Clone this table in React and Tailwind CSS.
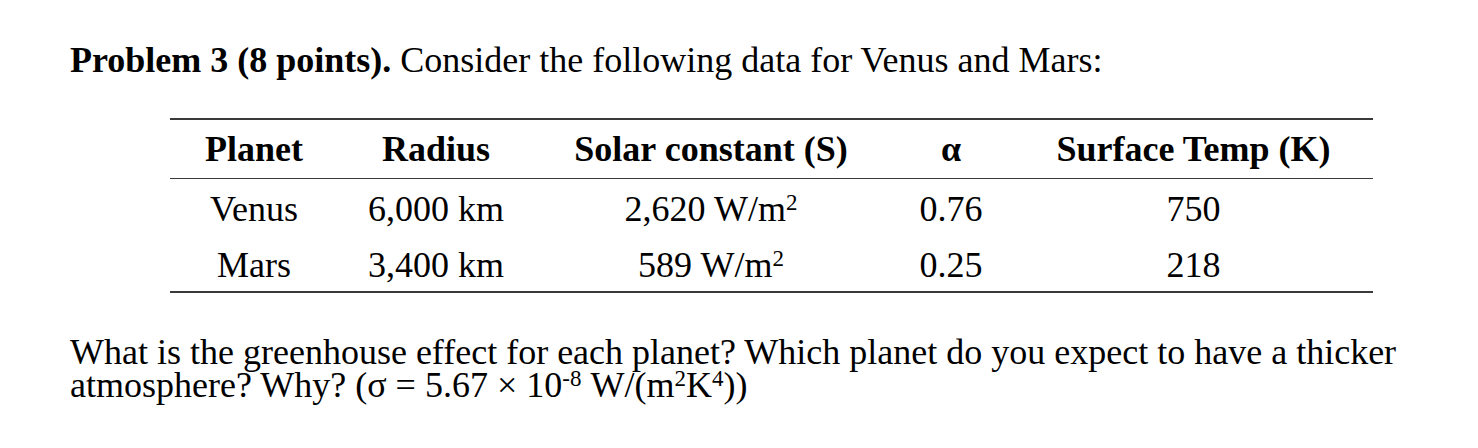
import React from "react";

const rows = [
  { planet: "Venus", radius: "6,000 km", solar: "2,620", alpha: "0.76", temp: "750" },
  { planet: "Mars", radius: "3,400 km", solar: "589", alpha: "0.25", temp: "218" },
];

const cols = "grid grid-cols-[168px_196px_354px_126px_359px]";

export default function App() {
  return (
    <div
      className="w-[1478px] h-[448px] bg-white text-black pl-[70px] pt-[40px]"
      style={{ fontFamily: '"Liberation Serif", "Times New Roman", serif' }}
    >
      <p className="text-[36px] leading-[40px]">
        <b>Problem 3 (8 points).</b> Consider the following data for Venus and Mars:
      </p>

      <div className="ml-[100px] mt-[38px] w-[1203px] border-t-2 border-b-2 border-[#3a3a3a] text-[36px]">
        <div className={`${cols} font-bold h-[59px] items-center border-b border-[#3a3a3a] text-center`}>
          <div>Planet</div>
          <div>Radius</div>
          <div>Solar constant (S)</div>
          <div>α</div>
          <div>Surface Temp (K)</div>
        </div>
        {rows.map((r) => (
          <div key={r.planet} className={`${cols} h-[56px] items-center text-center pt-[3px]`}>
            <div>{r.planet}</div>
            <div>{r.radius}</div>
            <div>
              {r.solar} W/m<sup className="text-[23px]">2</sup>
            </div>
            <div>{r.alpha}</div>
            <div>{r.temp}</div>
          </div>
        ))}
      </div>

      <p className="mt-[43px] text-[36px] leading-[33px] w-[1360px]">
        What is the greenhouse effect for each planet? Which planet do you expect to have a thicker
        atmosphere? Why? (σ = 5.67 × 10<sup className="text-[23px]">-8</sup> W/(m
        <sup className="text-[23px]">2</sup>K<sup className="text-[23px]">4</sup>))
      </p>
    </div>
  );
}
